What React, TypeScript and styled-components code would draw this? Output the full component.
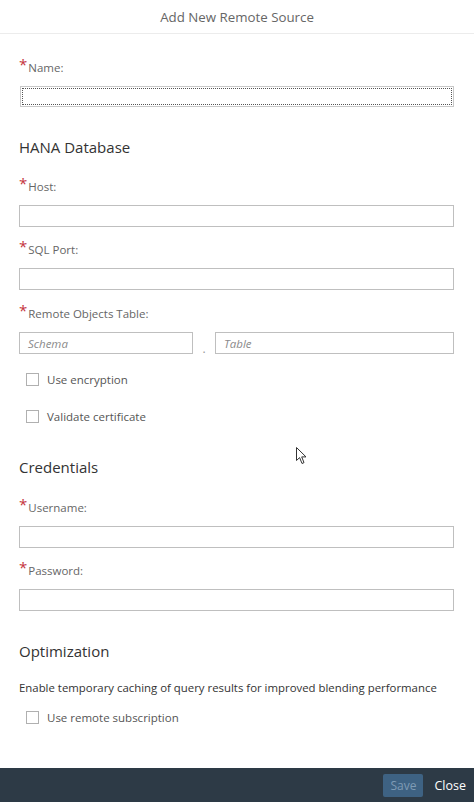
import React from "react";
import styled, { createGlobalStyle } from "styled-components";

const GlobalStyle = createGlobalStyle`
  html, body {
    margin: 0;
    padding: 0;
    background: #ffffff;
  }
  body {
    font-family: "Open Sans", "Noto Sans", "Liberation Sans", sans-serif;
  }
`;

const Dialog = styled.div`
  position: relative;
  width: 474px;
  height: 802px;
  display: flex;
  flex-direction: column;
  background: #fff;
  overflow: hidden;
`;

const Header = styled.div`
  height: 34px;
  flex-shrink: 0;
  display: flex;
  align-items: center;
  justify-content: center;
  border-bottom: 1px solid #ececec;
  box-sizing: border-box;
  font-size: 13.3px;
  color: #666;
`;

const Content = styled.div`
  flex: 1;
  padding: 0 20px 0 19px;
  display: flex;
  flex-direction: column;
`;

const Label = styled.div<{ $top: number }>`
  margin-top: ${(p) => p.$top}px;
  height: 16px;
  line-height: 16px;
  font-size: 11.5px;
  color: #666;
  display: flex;
  align-items: flex-start;
`;

const Star = styled.span`
  color: #c4323c;
  font-size: 15px;
  line-height: 12px;
  margin-top: -2px;
  margin-right: 1px;
`;

const Input = styled.div<{ $focused?: boolean; $basis?: string }>`
  margin-top: 10px;
  height: 22px;
  flex: ${(p) => p.$basis || "none"};
  box-sizing: border-box;
  border: 1px solid #bfbfbf;
  background: #fff;
  ${(p) =>
    p.$focused &&
    `
    margin-left: 1px;
    height: 21px;
    outline: 1px dotted #555;
    outline-offset: -3px;
    border-color: #c8c8c8;
  `}
  display: flex;
  align-items: center;
  padding: 0 8px;
  font-size: 11.5px;
  font-style: italic;
  color: #8a8a8a;
`;

const SectionTitle = styled.div<{ $top: number }>`
  margin-top: ${(p) => p.$top}px;
  height: 20px;
  line-height: 20px;
  font-size: 15px;
  color: #333;
`;

const SplitRow = styled.div`
  display: flex;
  align-items: flex-end;
  margin-top: 10px;
  & > div {
    margin-top: 0;
  }
`;

const Dot = styled.span`
  width: 22px;
  text-align: center;
  font-size: 12px;
  color: #999;
  line-height: 10px;
`;

const CheckRow = styled.div<{ $top: number }>`
  margin-top: ${(p) => p.$top}px;
  margin-left: 7px;
  height: 16px;
  display: flex;
  align-items: center;
  gap: 8px;
  font-size: 11.5px;
  color: #555;
`;

const Box = styled.span`
  width: 13px;
  height: 13px;
  box-sizing: border-box;
  border: 1px solid #b0b0b0;
  background: #fff;
`;

const Note = styled.div`
  margin-top: 18px;
  height: 18px;
  line-height: 18px;
  font-size: 11.4px;
  color: #333;
  white-space: nowrap;
`;

const Footer = styled.div`
  height: 34px;
  flex-shrink: 0;
  background: #2d3a46;
  display: flex;
  align-items: center;
  justify-content: flex-end;
  gap: 11px;
  padding-right: 8px;
`;

const SaveButton = styled.div`
  height: 23px;
  width: 40px;
  display: flex;
  align-items: center;
  justify-content: center;
  background: #3e6283;
  border-radius: 2px;
  color: #7f9bb5;
  font-size: 12px;
`;

const CloseButton = styled.div`
  color: #fff;
  font-size: 12.5px;
`;

const Cursor = styled.svg`
  position: absolute;
  left: 296px;
  top: 447px;
`;

const Field = ({ label, top, focused }: { label: string; top: number; focused?: boolean }) => (
  <>
    <Label $top={top}>
      <Star>*</Star>
      {label}
    </Label>
    <Input $focused={focused} />
  </>
);

const Check = ({ label, top }: { label: string; top: number }) => (
  <CheckRow $top={top}>
    <Box />
    {label}
  </CheckRow>
);

export default function App() {
  return (
    <Dialog>
      <GlobalStyle />
      <Header>Add New Remote Source</Header>
      <Content>
        <Field label="Name:" top={26} focused />

        <SectionTitle $top={30}>HANA Database</SectionTitle>
        <Field label="Host:" top={22} />
        <Field label="SQL Port:" top={15} />
        <Label $top={16}>
          <Star>*</Star>
          Remote Objects Table:
        </Label>
        <SplitRow>
          <Input $basis="0 0 174px">Schema</Input>
          <Dot>.</Dot>
          <Input $basis="1">Table</Input>
        </SplitRow>
        <Check label="Use encryption" top={17} />
        <Check label="Validate certificate" top={21} />

        <SectionTitle $top={33}>Credentials</SectionTitle>
        <Field label="Username:" top={23} />
        <Field label="Password:" top={15} />

        <SectionTitle $top={30}>Optimization</SectionTitle>
        <Note>Enable temporary caching of query results for improved blending performance</Note>
        <Check label="Use remote subscription" top={12} />
      </Content>
      <Footer>
        <SaveButton>Save</SaveButton>
        <CloseButton>Close</CloseButton>
      </Footer>
      <Cursor width="12" height="18" viewBox="0 0 12 18">
        <path
          d="M0.5 0.5 L0.5 13.5 L3.6 10.6 L6 16.5 L8 15.6 L5.7 9.9 L10 9.9 Z"
          fill="#fff"
          stroke="#333"
          strokeWidth="1"
          strokeLinejoin="round"
        />
      </Cursor>
    </Dialog>
  );
}
